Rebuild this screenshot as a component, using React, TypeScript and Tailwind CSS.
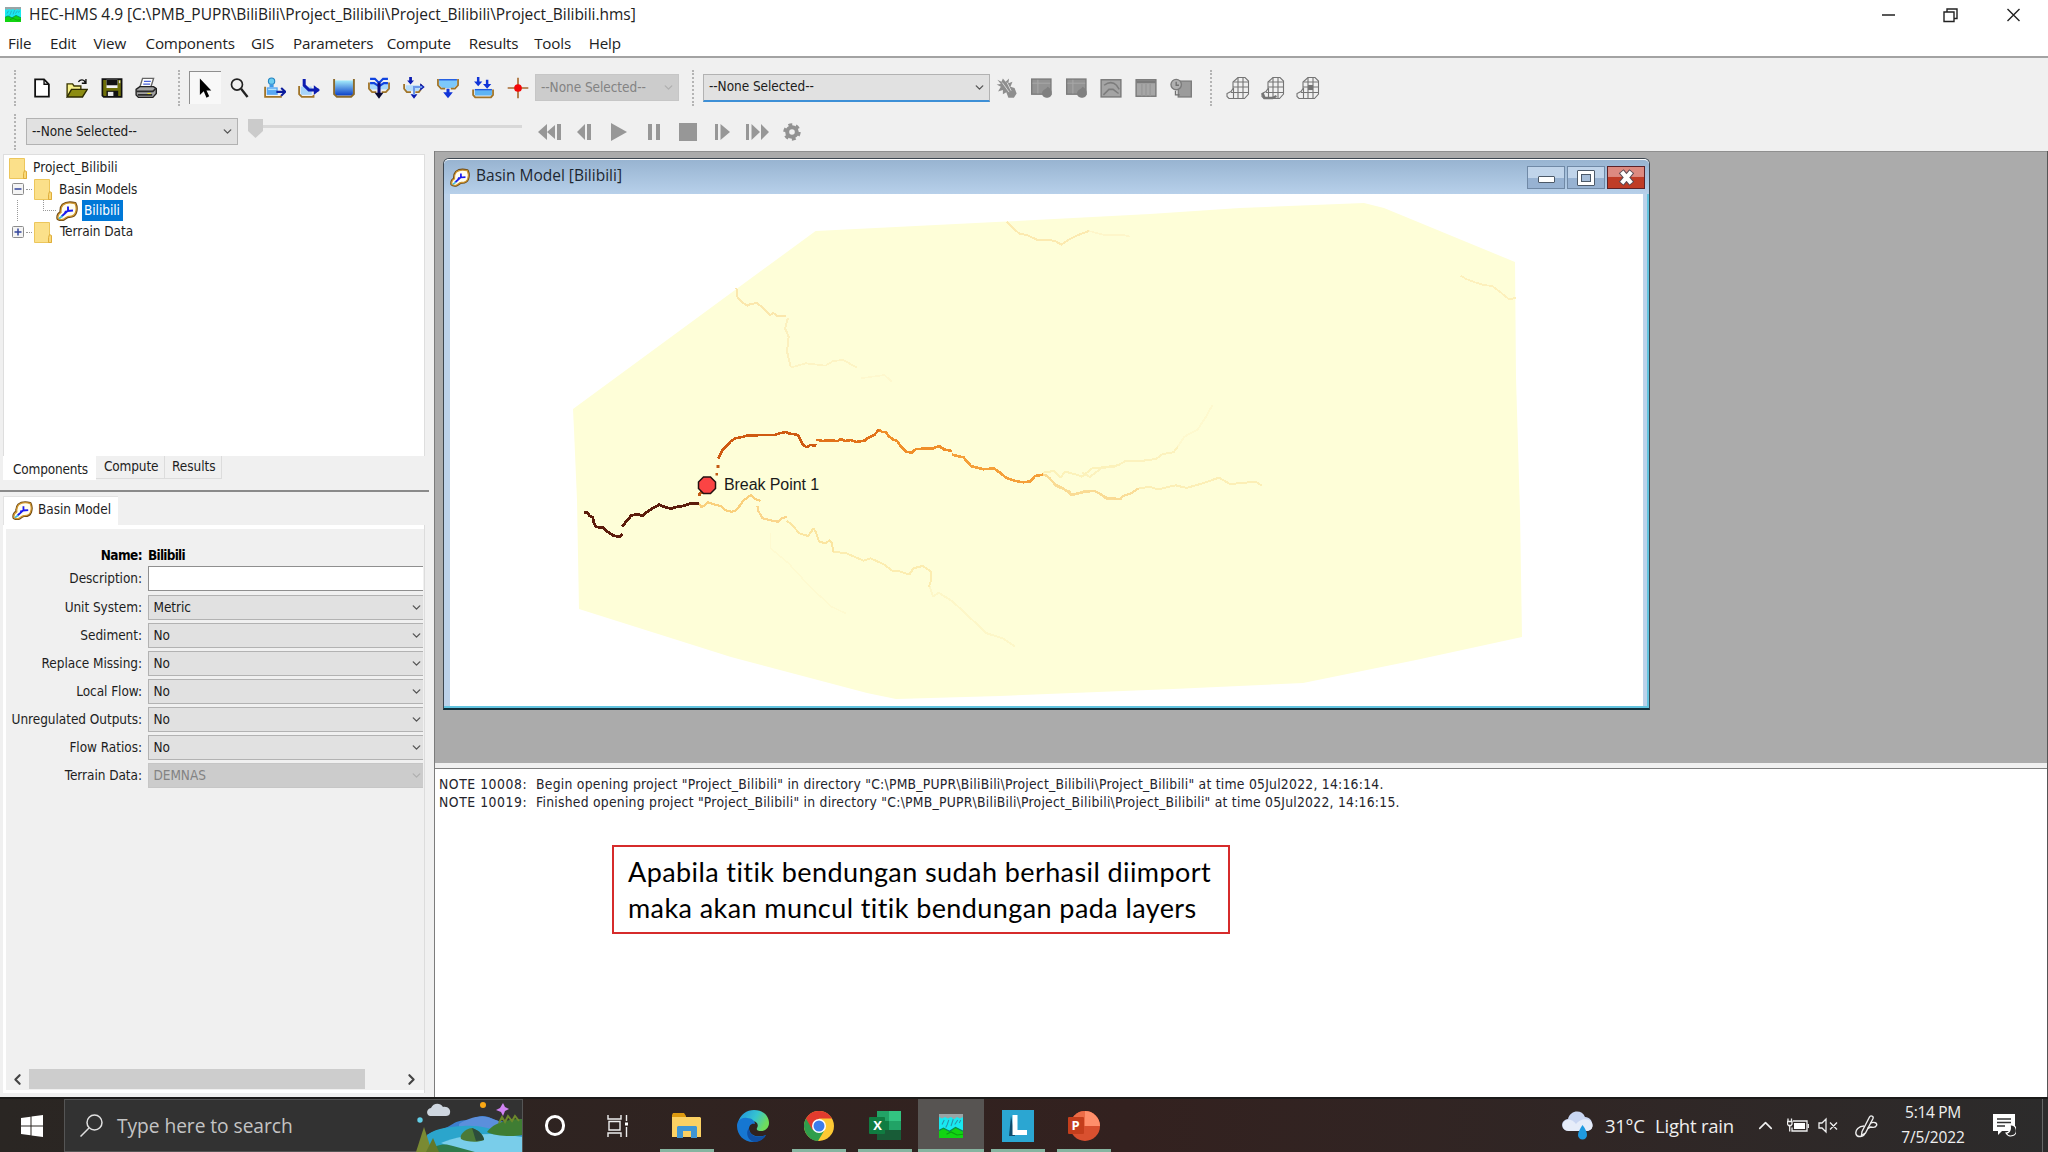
import type { ReactNode } from 'react';
import clsx from 'clsx';
import { ChevronDown, ChevronLeft, ChevronRight, ChevronUp, Search } from 'lucide-react';

const swingFont = "font-['DejaVu_Sans_Condensed','DejaVu_Sans',sans-serif] text-[13.5px] leading-none whitespace-pre";
const swing = `${swingFont} tracking-[-0.05px]`;
const segoe = "font-['Open_Sans','Noto_Sans',sans-serif] leading-none whitespace-pre";

const menus = [
  { label: 'File', cell: 'w-[42px]' },
  { label: 'Edit', cell: 'w-[43.5px]' },
  { label: 'View', cell: 'w-[52px]' },
  { label: 'Components', cell: 'w-[105.5px]' },
  { label: 'GIS', cell: 'w-[42px]' },
  { label: 'Parameters', cell: 'w-[93.7px]' },
  { label: 'Compute', cell: 'w-[82px]' },
  { label: 'Results', cell: 'w-[65.5px]' },
  { label: 'Tools', cell: 'w-[54.5px]' },
  { label: 'Help', cell: 'w-[50px]' },
];

const fields = [
  { label: 'Unit System:', value: 'Metric' },
  { label: 'Sediment:', value: 'No' },
  { label: 'Replace Missing:', value: 'No' },
  { label: 'Local Flow:', value: 'No' },
  { label: 'Unregulated Outputs:', value: 'No' },
  { label: 'Flow Ratios:', value: 'No' },
  { label: 'Terrain Data:', value: 'DEMNAS', disabled: true },
];

const notes = [
  { id: 'NOTE 10008:  ', text: 'Begin opening project "Project_Bilibili" in directory "C:\\PMB_PUPR\\BiliBili\\Project_Bilibili\\Project_Bilibili" at time 05Jul2022, 14:16:14.' },
  { id: 'NOTE 10019:  ', text: 'Finished opening project "Project_Bilibili" in directory "C:\\PMB_PUPR\\BiliBili\\Project_Bilibili\\Project_Bilibili" at time 05Jul2022, 14:16:15.' },
];

// ---------- Small shared pieces ----------

function Handle() {
  return <div className="h-[36px] w-0 shrink-0 border-l-2 border-dotted border-[#b4b4b4]" />;
}

function Cell({ children }: { children: ReactNode }) {
  return <div className="flex w-[34.7px] shrink-0 items-center justify-center">{children}</div>;
}

function Icon16({ children, className }: { children: ReactNode; className?: string }) {
  return (
    <svg viewBox="0 0 16 16" className={clsx('h-[22px] w-[22px] shrink-0', className)} fill="none">
      {children}
    </svg>
  );
}

function HmsLogo({ className }: { className?: string }) {
  return (
    <svg viewBox="0 0 16 16" preserveAspectRatio="none" className={className}>
      <rect width="16" height="16" fill="#19e8f0" />
      <path d="M0 0h16v2l-2 1-2-1-2 1.500-2-1.500-2 1-2-1-2 1-2-1z" fill="#9aa4a6" />
      <path d="M3.500 4l-1.500 3M6.500 4l-1 3-1 2M9.500 3.500L8 8M12.500 4l-2 3M14.500 4l-1 2" stroke="#2a93a8" strokeWidth=".7" fill="none" />
      <path d="M0 11l3-1.500 4 2 4-2.500 5 2.500V16H0z" fill="#12d412" />
      <path d="M0 11l3-1.500 4 2 4-2.500 5 2.500" stroke="#0a8a50" strokeWidth=".8" fill="none" />
      <path d="M5 13.500l3-1.500 4 2 4-.5" stroke="#0aa010" strokeWidth=".8" fill="none" />
    </svg>
  );
}

function BasinIcon({ className }: { className?: string }) {
  const outline = 'M2 17.500c-.5-3 0-4.500 3-6C5 9 4.500 6.500 7 4c3-2.500 8-2.500 12-1.500 1.500 3 1.500 6 .5 9-1 3-4 4-7 3.800-3 .5-4 3-6 3.200-2 .2-3.500 0-4.500-1z';
  return (
    <svg viewBox="0 0 22 20" className={clsx('shrink-0', className)} fill="none">
      <path d={outline} fill="#fffbe2" stroke="#6e4812" strokeWidth="3.200" strokeLinejoin="round" />
      <path d={outline} fill="#fffdf0" stroke="#cf962e" strokeWidth="1.300" />
      <path d="M5.500 15.500l6.500-6V5.500M11.500 10l5.500-.5M8.500 13l1.500-3" stroke="#1a1af0" strokeWidth="1.900" />
      <path d="M3 17.500l3.500-2.500" stroke="#40b8d8" strokeWidth="1.800" />
    </svg>
  );
}

function Folder() {
  return (
    <svg viewBox="0 0 18 21" className="h-[21px] w-[18px] shrink-0">
      <path d="M.5.500h15v14l2 1v5H.5z" fill="#fbe08a" stroke="#ecc65c" />
      <path d="M14.500 20.500v-5l1-3 2 1v7z" fill="#f9d878" stroke="#dfae3c" />
    </svg>
  );
}

function Expander({ plus }: { plus?: boolean }) {
  return (
    <svg viewBox="0 0 12 12" className="h-[12px] w-[12px] shrink-0">
      <rect x=".5" y=".5" width="11" height="11" rx="1" fill="#f4f4f4" stroke="#8c8c8c" />
      <path d={plus ? 'M2.500 6h7M6 2.500v7' : 'M2.500 6h7'} stroke="#33469c" strokeWidth="1.500" />
    </svg>
  );
}

function Combo({ value, className, disabled, focused }: { value: string; className?: string; disabled?: boolean; focused?: boolean }) {
  return (
    <div
      className={clsx(
        'flex shrink-0 items-center justify-between border pl-[5px]',
        disabled ? 'border-[#c6c6c6] bg-[#cccccc] text-[#838383]' : 'border-[#b2b2b2] bg-[#e1e1e1] text-[#1c1c1c]',
        focused && 'border-b-2 border-b-[#3d8fd6]',
        className,
      )}
    >
      <span className={swing}>{value}</span>
      <ChevronDown className={clsx('h-[13px] w-[13px] shrink-0', disabled ? 'text-[#b0b0b0]' : 'text-[#555]')} strokeWidth={2.500} />
    </div>
  );
}

// ---------- Toolbar icons ----------

const Grid = ({ variant }: { variant?: 'bold' | 'dot' }) => (
  <svg viewBox="0 0 24 24" className="h-[24px] w-[24px]" fill="none" stroke="#747474" strokeWidth="1.100">
    <path d="M12 1.500h7l3.500 3.500v13l-4 4.500H3l-2-2v-3l4-2 2-3V6z" />
    <path d="M12 1.500v21M17 1.500v21M7.500 6h15M7 11h15.500M5 16.500h17.500M7.500 12v10.500" />
    {variant === 'bold' && <path d="M1.500 17l2 5h8l4-2" strokeWidth="2.400" />}
    {variant === 'dot' && <rect x="12.500" y="9.500" width="4" height="4" fill="#747474" />}
  </svg>
);

function MainToolbar() {
  return (
    <div className="flex h-[58px] items-center pl-[14px] pt-[1px]">
      <Handle />
      <div className="ml-[9px] flex">
        <Cell>
          <Icon16><path d="M3 1.800h6.500L13 5.300v9H3z" fill="#fff" stroke="#111" strokeWidth="1.300" /><path d="M9.500 1.800v3.500H13" stroke="#111" /></Icon16>
        </Cell>
        <Cell>
          <Icon16>
            <path d="M.8 14V5h4l1 1.500h5V9" fill="#f6f08a" stroke="#3a3600" />
            <path d="M.8 14.500L4 9h11.500L12 14.500z" fill="#8c8c12" stroke="#2c2a00" />
            <path d="M9 3.500c1.500-2 4-2 5 .5M14.500 1.500v3h-3" stroke="#111" />
          </Icon16>
        </Cell>
        <Cell>
          <Icon16>
            <path d="M1 1.500h14v13H2L1 13.500z" fill="#6f7008" stroke="#111" strokeWidth="1.200" />
            <rect x="4" y="2" width="8" height="6" fill="#f4f4f4" /><rect x="4" y="2" width="8" height="4" fill="#141414" />
            <rect x="4" y="10" width="8.500" height="4.500" fill="#111" /><rect x="5" y="10.800" width="4" height="3" fill="#e8e8e8" /><path d="M13.500 2.500v2" stroke="#ddd" />
          </Icon16>
        </Cell>
        <Cell>
          <Icon16>
            <path d="M5.500 1h8L11.500 7.500h-8z" fill="#fff" stroke="#666" /><path d="M6.500 3.200h5M6 5.200h5" stroke="#4860d8" />
            <path d="M.8 9L3.500 7h10l2 1.500V12l-2.500 2.800H2.500L.8 13z" fill="#a4a4a4" stroke="#222" />
            <path d="M1 10.500h12l2.500-2.500M2 13h10.500" stroke="#2c2c2c" strokeWidth="1.200" /><path d="M9 12h2.500" stroke="#e8e020" strokeWidth=".8" />
          </Icon16>
        </Cell>
      </div>
      <div className="ml-[14px]"><Handle /></div>
      <div className="ml-[9px] flex h-[33px] w-[32px] items-center justify-center border-l border-t border-[#8f8f8f] bg-[#f8f8f8]">
        <Icon16 className="-ml-[3px]"><path d="M5 1v12l2.800-2.600L9.800 15l2-1-2-4.200h3.500z" fill="#000" /></Icon16>
      </div>
      <div className="ml-[2px] flex">
        <Cell><Icon16><circle cx="5.800" cy="5.500" r="4" stroke="#222" strokeWidth="1.200" /><path d="M8.800 8.500l4.700 6" stroke="#222" strokeWidth="1.700" /></Icon16></Cell>
        {/* subbasin */}
        <Cell>
          <Icon16>
            <circle cx="5.500" cy="3" r="2.300" fill="#6ccdf0" stroke="#2484c0" strokeWidth=".8" /><path d="M4 5.500h3v2H4z" fill="#3a9ae8" />
            <path d="M2 7.500h8v5.500H2z" fill="#58a8f4" /><path d="M3 9h6" stroke="#b4e4fc" /><path d="M.8 7v7.500h11.500V13.500" stroke="#a07428" strokeWidth="1.300" />
            <path d="M9 10.800h5.500M12.500 8l3 2.800-3 2.800" stroke="#0c1c9c" strokeWidth="1.500" />
          </Icon16>
        </Cell>
        {/* reach */}
        <Cell>
          <Icon16>
            <path d="M2 7h8v6H2z" fill="#a8d4f8" /><path d="M.8 6.500v6l2 2h8.500V13" stroke="#a07428" strokeWidth="1.300" />
            <path d="M4.500 1.500v4.500l3.500 3.500H15" stroke="#0c1cb0" strokeWidth="2.200" /><path d="M11.500 6L16 9.500 11.500 13z" fill="#0c1cb0" />
          </Icon16>
        </Cell>
        {/* reservoir */}
        <Cell>
          <svg viewBox="0 0 16 16" className="h-[22px] w-[22px]" fill="none">
            <defs>
              <linearGradient id="water" x1="0" y1="0" x2="0" y2="1"><stop offset="0" stopColor="#a4ecfc" /><stop offset="1" stopColor="#0a3fc8" /></linearGradient>
            </defs>
            <rect x="1.500" y="2.500" width="13" height="11" fill="url(#water)" />
            <path d="M.8 1.500v11l2 1.800h10.400l2-1.800v-11" stroke="#8a6a2c" strokeWidth="1.400" />
          </svg>
        </Cell>
        {/* junction */}
        <Cell>
          <Icon16>
            <path d="M1.500 5h13v4h-13z" fill="#a6d6fa" /><path d="M.7 4v4.500L3 11h3M15.300 4v4.500L13 11h-3" stroke="#a07428" strokeWidth="1.300" />
            <path d="M1.500 1.300h3.500l3 3 3-3h3.500M1.500 4.500h3l3 2M14.500 4.500h-3l-3 2" stroke="#1044e0" strokeWidth="1.600" /><path d="M8 4v8" stroke="#0c0c7c" strokeWidth="2.200" />
            <path d="M4.800 11.500h6.400L8 15.800z" fill="#0a0a30" />
          </Icon16>
        </Cell>
        {/* diversion */}
        <Cell>
          <Icon16>
            <path d="M2 6h10v4H2z" fill="#b4dcfa" /><path d="M.8 5v3.500l2 2.500h3M13 5v1M9 11h2.500l1.500-2" stroke="#a07428" strokeWidth="1.300" />
            <path d="M5.500 0v3" stroke="#0c1cb0" strokeWidth="2" /><path d="M3 2.500h5L5.500 5.500zM5.500 12.500h5L8 15.800zM12.500 4.500L15.800 7.300l-3.300 2.700z" fill="#0c1cb0" />
            <path d="M8 13V7.300h6" stroke="#6c98e8" strokeWidth="1.500" />
          </Icon16>
        </Cell>
        {/* source */}
        <Cell>
          <Icon16>
            <path d="M1.500 1.800h13V6l-2.500 2H4L1.500 6z" fill="#7cc8fa" /><path d="M.7 1.500V6L3 8.500h3M15.300 1.500V6L13 8.500h-3" stroke="#a07428" strokeWidth="1.300" />
            <path d="M1.500 2h13" stroke="#1c58e0" /><path d="M8 8.500v3.500" stroke="#1034d8" strokeWidth="2.200" /><path d="M4.500 11h7L8 15.500z" fill="#1034d8" />
          </Icon16>
        </Cell>
        {/* sink */}
        <Cell>
          <Icon16>
            <path d="M2 9.500h12.500v4H2z" fill="#5eb4f4" /><path d="M.8 9v4l1.500 1.800h11.500l1.500-1.800V9" stroke="#a07428" strokeWidth="1.300" />
            <path d="M4.500 0v4M11 2v4" stroke="#1034d8" strokeWidth="1.800" /><path d="M1.500 3.200h6l-3 3.500zM8 5h6l-3 3.500z" fill="#1034d8" />
            <path d="M2 9.200h12.500" stroke="#1c58e0" />
          </Icon16>
        </Cell>
        {/* break point */}
        <Cell><Icon16><path d="M8 .5v15M.5 8h15" stroke="#a86a30" strokeWidth="1.200" /><circle cx="8" cy="8" r="2.800" fill="#f40808" /></Icon16></Cell>
      </div>
      <Combo value="--None Selected--" disabled className="h-[27px] w-[144px] pr-[3px]" />
      <div className="ml-[13px]"><Handle /></div>
      <Combo value="--None Selected--" focused className="ml-[9px] h-[28px] w-[287px] pr-[3px]" />
      <div className="flex">
        <Cell>
          <Icon16><path d="M1 2l3 1.500L5 1l2 2.500L9.500 1 9 4.500l3-1-1.500 3.500 3 1 1.500 4-2 3H9L7.500 11 5 12.500 5 9.500 1.500 10.500 3.500 7 .5 5.500l3-.5z" fill="#8e8e8e" /><path d="M4.500 4l5 7M8 4l3 6" stroke="#d8d8d8" strokeWidth=".7" /></Icon16>
        </Cell>
        {[0, 1].map(i => (
          <Cell key={i}>
            <Icon16><rect x=".5" y="1.500" width="14" height="11" fill="#939393" stroke="#7b7b7b" /><path d="M1 4.500h13M5 2v10" stroke="#aaa" strokeWidth=".7" /><path d="M8 12c0-3 3-3 4-5 2 1 3.500 3 3 5.500s-2.500 2.500-4 2.500S8 14 8 12z" fill="#808080" /></Icon16>
          </Cell>
        ))}
        <Cell><Icon16><rect x=".8" y="2" width="14.400" height="12.500" fill="#a4a4a4" stroke="#787878" /><path d="M3 6c4-3 7-2 9 0l2 3M2.500 13l4-4h3l4 3" stroke="#7c7c7c" strokeWidth="1.100" /></Icon16></Cell>
        <Cell><Icon16><rect x=".8" y="2" width="14.400" height="12" fill="#a6a6a6" stroke="#787878" /><path d="M1 3.500h14" stroke="#7a7a7a" strokeWidth="2" /><path d="M5 5v9M8 5v9M11 5v9" stroke="#989898" /></Icon16></Cell>
        <Cell><Icon16><rect x="6" y="3" width="9.500" height="11.500" fill="#9b9b9b" stroke="#7d7d7d" /><circle cx="4.500" cy="5.500" r="3.800" fill="#b0b0b0" stroke="#7a7a7a" /><path d="M4.500 3.500v2.500h2M4 10v3h3" stroke="#707070" /></Icon16></Cell>
      </div>
      <div className="ml-[12px]"><Handle /></div>
      <div className="ml-[9px] flex">
        <Cell><Grid /></Cell>
        <Cell><Grid variant="bold" /></Cell>
        <Cell><Grid variant="dot" /></Cell>
      </div>
    </div>
  );
}

const players = [
  'M0 9L9 1v16zM9 9l8-7v14zM19 1h4v16h-4z',
  'M4 9l8-8v16zM14 1h4v16h-4z',
  'M4 0l16 9-16 9z',
  'M6 1h4v16H6zM14 1h4v16h-4z',
  'M2 0h18v18H2z',
  'M4 1h3v16H4zM9.500 1L19 9l-9.500 8z',
  'M0 1h3v16H0zM5.500 1L14 9l-8.500 8zM15 1l8 8-8 8z',
];

function PlayToolbar() {
  return (
    <div className="flex h-[35px] items-center pb-[4px] pl-[14px]">
      <Handle />
      <Combo value="--None Selected--" className="ml-[10px] h-[27px] w-[212px] pr-[3px]" />
      <div className="ml-[10px] flex h-[26px] w-[274px] items-start">
        <svg viewBox="0 0 15 19" className="h-[19px] w-[15px]"><path d="M0 0h15v12l-7.500 7L0 12z" fill="#cbcbcb" /></svg>
        <div className="mt-[6px] h-[3px] flex-1 bg-[#d8d8d8]" />
      </div>
      <div className="ml-[10px] flex">
        {players.map(d => (
          <Cell key={d}><svg viewBox="0 0 23 18" className="h-[18px] w-[23px]"><path d={d} fill="#979797" /></svg></Cell>
        ))}
        <Cell>
          <svg viewBox="0 0 18 18" className="h-[18px] w-[18px]" fill="none">
            <circle cx="9" cy="9" r="4.800" stroke="#929292" strokeWidth="4" />
            <circle cx="9" cy="9" r="7.200" stroke="#929292" strokeWidth="3" strokeDasharray="3.800 3.740" />
          </svg>
        </Cell>
      </div>
    </div>
  );
}

// ---------- Left side ----------

function Tree() {
  return (
    <div className="ml-[3px] mr-[9px] mt-[3px] h-[302px] border border-b-0 border-[#dedede] bg-white pl-[5px] pt-[2.500px] text-[#1e1e1e]">
      <div className="flex h-[21.300px] items-center">
        <Folder />
        <span className={clsx(swingFont, 'ml-[6px] tracking-[0.05px]')}>Project_Bilibili</span>
      </div>
      <div className="flex h-[21.300px] items-center pl-[3px]">
        <Expander />
        <div className="w-[10px] px-[2px]"><div className="border-t border-dotted border-[#999]" /></div>
        <Folder />
        <span className={clsx(swingFont, 'ml-[7px] tracking-[-0.13px]')}>Basin Models</span>
      </div>
      <div className="flex h-[21.300px] items-center pl-[8px]">
        <div className="h-full border-l border-dotted border-[#999]" />
        <div className="mb-[10px] ml-[25px] h-[11px] w-[13px] border-b border-l border-dotted border-[#999]" />
        <BasinIcon className="h-[20px] w-[22px]" />
        <span className={clsx(swing, 'ml-[4px] flex h-[21px] w-[41px] items-center bg-[#0078d7] pl-[2px] text-white')}>Bilibili</span>
      </div>
      <div className="flex h-[21.300px] items-center pl-[3px]">
        <Expander plus />
        <div className="w-[10px] px-[2px]"><div className="border-t border-dotted border-[#999]" /></div>
        <Folder />
        <span className={clsx(swing, 'ml-[8px]')}>Terrain Data</span>
      </div>
    </div>
  );
}

function Sidebar() {
  return (
    <div className="flex w-[434px] shrink-0 flex-col bg-[#f0f0f0]">
      <Tree />
      <div className="flex h-[34px] items-start pl-[3px] text-[#1e1e1e]">
        <div className={clsx(swingFont, 'flex h-[24px] w-[93px] items-center bg-white pl-[10px] pt-[4px] tracking-[-0.2px]')}>Components</div>
        <div className={clsx(swingFont, 'flex h-[23px] w-[69px] items-center border-b border-r border-[#dcdcdc] pl-[8px] tracking-[-0.15px]')}>Compute</div>
        <div className={clsx(swingFont, 'flex h-[23px] w-[57px] items-center border-b border-r border-[#dcdcdc] pl-[7px] tracking-[-0.05px]')}>Results</div>
      </div>
      <div className="mr-[5px] h-[1.500px] bg-[#8a8a8a]" />
      <div className="ml-[3px] mt-[4px] flex h-[29px] w-[115px] items-center border-l border-t border-[#e2e2e2] bg-white pb-[1px] pl-[8px] text-[#1e1e1e]">
        <BasinIcon className="h-[19px] w-[21px]" />
        <span className={clsx(swingFont, 'ml-[5px] tracking-[-0.05px]')}>Basin Model</span>
      </div>
      <div className="mb-[4px] ml-[3px] mr-[9px] flex flex-1 flex-col border-r border-[#dcdcdc] bg-white pb-[3px] pl-[3px] pt-[4px]">
        <div className="flex flex-1 flex-col bg-[#f0f0f0] pt-[17px] text-[#1e1e1e]">
          <div className="flex h-[20px] items-center font-bold text-black">
            <span className={clsx(swingFont, 'w-[136px] text-right tracking-[-0.55px]')}>Name:</span>
            <span className={clsx(swingFont, 'ml-[6px] tracking-[-0.75px]')}>Bilibili</span>
          </div>
          <div className="flex h-[25px] items-center">
            <span className={clsx(swing, 'w-[136px] pt-[2px] text-right')}>Description:</span>
            <div className="ml-[5.500px] h-[25px] w-[275px] border border-r-0 border-[#8f8f8f] bg-white" />
          </div>
          <div className="mt-[3px] flex flex-col">
            {fields.map(f => (
              <div key={f.label} className="flex h-[28px] items-center">
                <span className={clsx(swing, 'w-[136px] text-right')}>{f.label}</span>
                <Combo value={f.value} disabled={f.disabled} className="ml-[5.500px] h-[25px] w-[275px] border-r-0" />
              </div>
            ))}
          </div>
          <div className="mt-auto mb-[1px] flex h-[20px] items-center">
            <ChevronLeft className="ml-[3px] h-[17px] w-[17px] text-[#444]" strokeWidth={3} />
            <div className="ml-[3px] h-full w-[336px] bg-[#cdcdcd]" />
            <ChevronRight className="ml-[38px] h-[17px] w-[17px] text-[#444]" strokeWidth={3} />
          </div>
        </div>
      </div>
    </div>
  );
}

// ---------- Basin map ----------

type River = { pts: string; color: string; width: number };

// Each tile of the map keeps its river points in its own grid
const westRivers: River[] = [
  { pts: '590,400 590,445 640,490 700,560 760,620 800,640', color: '#fefad0', width: 1.5 },
  { pts: '1035,560 1045,590 1060,578 1100,605 1150,655 1195,700 1240,715 1275,740', color: '#fdf7c8', width: 2 },
  { pts: '765,456 800,459 850,482 870,475 905,492 930,512 950,514 978,524 990,505 1015,498 1040,515 1040,540 1033,560', color: '#fcedb0', width: 2 },
  { pts: '635,362 650,375 670,400 695,408 710,385 718,400 725,425 745,430 755,420 762,430 765,456', color: '#fbe5a0', width: 2 },
  { pts: '387,310 397,322 415,307 430,313 450,318 462,330 480,335 490,333 500,322 515,300 535,285 548,298 562,303', color: '#fad07c', width: 2.2 },
  { pts: '553,318 555,332 567,355 585,360 610,365 622,355 635,350', color: '#fbd68c', width: 2.2 },
  { pts: '1353,218 1383,213 1402,232 1415,215 1440,222 1462,230 1490,205 1520,202 1568,195', color: '#fcf2ba', width: 2 },
  { pts: '1353,223 1370,233 1385,252 1410,265 1430,284 1460,278 1497,272 1530,293 1568,297', color: '#fadb94', width: 2.2 },
  { pts: '1098,164 1112,168 1130,172 1140,185 1152,199 1172,204 1185,208 1215,205 1232,218 1250,234 1275,243 1298,247 1318,244 1330,228 1353,224', color: '#f5a03a', width: 2.6 },
  { pts: '893,89 902,96 912,96 922,110 932,118 945,124 955,140 970,155 985,158 997,147 1020,146 1045,145 1062,138 1075,148 1097,153', color: '#f08f2a', width: 2.6 },
  { pts: '718,119 735,123 752,121 778,123 787,117 797,123 815,120 830,126 855,121 862,114 880,105 893,89', color: '#e2721a', width: 2.6 },
  { pts: '443,176 448,165 455,150 470,134 480,122 492,115 510,111 525,106 600,105 618,99 632,96 642,101 660,103 668,108 674,122 680,135 692,142 700,135 718,137', color: '#cf5a12', width: 2.6 },
  { pts: '389,288 392,280 400,276', color: '#c45a14', width: 3 },
  { pts: '67,338 77,338 82,347 92,352 95,370 102,381 122,383 130,394 142,401 150,407 168,411 176,402', color: '#5c1c0c', width: 2.8 },
  { pts: '173,380 188,362 200,346 215,343 232,347 243,336 258,326 278,314 290,320 310,326 325,321 345,318 365,311 388,310', color: '#5c1c0c', width: 2.8 },
];

const northRivers: River[] = [
  { pts: '775,430 777,455 790,473 803,482 812,476 828,475 845,492 860,511 868,503 876,512 900,512', color: '#fbe7ac', width: 2 },
  { pts: '905,520 898,550 907,575 903,620 912,665', color: '#fcf0be', width: 2 },
  { pts: '912,668 950,655 1000,662 1020,648 1045,645 1080,668', color: '#fdf4c4', width: 1.8 },
  { pts: '1090,700 1120,695 1150,690 1168,710', color: '#fef8ce', width: 1.6 },
];

const eastRivers: River[] = [
  { pts: '15,230 30,250 45,266 62,270 85,284 125,287 142,299 158,284 180,270 205,258', color: '#fceab0', width: 2 },
  { pts: '205,258 240,270 285,270 300,275', color: '#fef6ca', width: 1.6 },
  { pts: '1062,392 1075,402 1095,412 1115,420 1135,423 1155,443 1175,464 1190,458', color: '#fdf0bc', width: 1.8 },
  { pts: '190,983 207,996 235,968 262,967 290,948 325,948 360,942 375,927 400,922 410,905', color: '#fcf2be', width: 2 },
  { pts: '410,905 425,875 455,855 475,815 490,780', color: '#fef9ce', width: 1.8 },
  { pts: '105,988 130,1023 160,1040 165,1050 180,1047 190,1040 215,1037 232,1048 245,1061 278,1062 285,1052 300,1047 320,1030', color: '#fadd98', width: 2.2 },
  { pts: '320,1030 345,1026 365,1033 405,1021 430,1029 470,1014 505,998 530,1017 560,1014 590,1010 603,1022', color: '#fcefb6', width: 2 },
];

function Rivers({ list, transform }: { list: River[]; transform: string }) {
  return (
    <g transform={transform} fill="none" shapeRendering="crispEdges">
      {list.map(r => (
        <polyline key={r.pts} points={r.pts} stroke={r.color} strokeWidth={r.width} strokeLinejoin="bevel" vectorEffect="non-scaling-stroke" />
      ))}
    </g>
  );
}

function BasinMap() {
  return (
    <div className="relative flex-1 overflow-hidden bg-white">
      <svg viewBox="450 194 1193 512" className="block h-[512px] w-[1193px]">
        <polygon
          points="573,409 815.6,231 1006,221.500 1150,214 1240,208 1364,203 1384,208 1515,262 1516,378 1520,512 1522,637 1416,660 1303,683 1173,689 1000,696 896,699 867,693 731,657 579,609 577,500 574,430"
          fill="#fefed8"
        />
        <Rivers list={northRivers} transform="translate(430 145) scale(.3954 .3333)" />
        <Rivers list={eastRivers} transform="translate(1000 145) scale(.4337 .3333)" />
        <Rivers list={westRivers} transform="translate(560 400) scale(.3571 .3333)" />
        <rect x="715.500" y="473" width="2.500" height="2.500" fill="#c45a14" />
        <rect x="716.500" y="465" width="3" height="3" fill="#c45a14" />
        <path d="M703.500 477h7l5 5v6.500l-5 5h-7l-5-5v-6.500z" fill="#fb4444" stroke="#241010" strokeWidth="1.500" />
      </svg>
      <span className="absolute left-[274px] top-[283px] whitespace-pre font-['Liberation_Sans',Arial,sans-serif] text-[16px] leading-none tracking-[-0.08px] text-[#1a1a1a]">Break Point 1</span>
    </div>
  );
}

function BasinWindow() {
  return (
    <div className="ml-[8px] mt-[6px] flex h-[552px] w-[1207px] flex-col rounded-t-[6px] border border-[#3c4650] border-b-2 border-b-[#10303c] bg-[#bcd2ea]">
      <div className="flex h-[36px] items-center rounded-t-[5px] border-t border-white bg-linear-to-b from-[#98b4d1] to-[#b7d0ea] pl-[6px]">
        <BasinIcon className="h-[19px] w-[20px]" />
        <span className={clsx(segoe, 'ml-[6px] mb-[2px] text-[15.500px] tracking-[0px] text-[#1d2731]')}>Basin Model [Bilibili]</span>
        <div className="ml-auto mr-[4px] mt-[1px] flex gap-[2px]">
          <div className="flex h-[23px] w-[38px] items-center justify-center border border-[#7089a6] bg-linear-to-b from-[#c0d4ea] from-50% to-[#97b2d2] to-50%">
            <div className="mt-[3px] h-[7px] w-[17px] rounded-[1px] border border-[#4c5968] bg-white" />
          </div>
          <div className="flex h-[23px] w-[38px] items-center justify-center border border-[#7089a6] bg-linear-to-b from-[#c0d4ea] from-50% to-[#97b2d2] to-50%">
            <div className="flex h-[16px] w-[18px] items-center justify-center rounded-[1px] border border-[#4c5968] bg-white">
              <div className="h-[8px] w-[10px] border border-[#4c5968] bg-[#a6bdd8]" />
            </div>
          </div>
          <div className="flex h-[23px] w-[38px] items-center justify-center border border-[#5c2228] bg-linear-to-b from-[#dd8a80] from-45% to-[#c03c26] to-50%">
            <svg viewBox="0 0 18 16" className="h-[17px] w-[19px]" fill="none">
              <path d="M4 2l10 12M14 2L4 14" stroke="#5a4a54" strokeWidth="6" />
              <path d="M4.500 2.600l9 10.800M13.500 2.600l-9 10.800" stroke="#fff" strokeWidth="4" />
            </svg>
          </div>
        </div>
      </div>
      <div className="flex flex-1 border-b-2 border-r-2 border-[#62c4e0] pl-[6px] pr-[4px]">
        <BasinMap />
      </div>
    </div>
  );
}

function Console() {
  return (
    <div className="relative flex-1 border-t border-[#808080] bg-white pl-[4px] pt-[6px]">
      {notes.map(n => (
        <div key={n.id} className="whitespace-pre font-['DejaVu_Sans_Condensed','DejaVu_Sans',sans-serif] text-[13.800px] leading-[18px] tracking-[0.24px] text-[#24242c]">
          <span className="tracking-[0.55px]">{n.id}</span>
          {n.text}
        </div>
      ))}
      {/* instruction note laid over the log */}
      <div className="absolute left-[177px] top-[76px] h-[89px] w-[618px] whitespace-pre border-2 border-[#d62b2b] bg-white pl-[14px] pt-[7px] font-['Lato','Carlito',sans-serif] text-[27px] leading-[36px] tracking-[0.41px] text-black [font-variant-ligatures:none]">
        <div>Apabila titik bendungan sudah berhasil diimport</div>
        <div>maka akan muncul titik bendungan pada layers</div>
      </div>
    </div>
  );
}

// ---------- Taskbar ----------

function SearchArt() {
  return (
    <svg viewBox="0 0 107 53" className="h-[53px] w-[107px] shrink-0">
      <path d="M12 36c10-6 14-4 24-10 12-8 18-2 26-8 10-4 16 4 24 4l21 6v25H12z" fill="#3d7fd0" />
      <path d="M44 25c8-5 18-9 28-7 10 3 18 8 35 10v8H44z" fill="#5b8fdc" />
      <path d="M12 36c12-8 22-8 36-9 20-1 30 4 59 10v16H14z" fill="#2ba5cc" />
      <path d="M26 44c20-9 50-12 81-6v15H50z" fill="#79cdea" />
      <path d="M46 40c-2-4 4-10 11-11 7 2 12 8 12 12-6 3-18 2-23-1z" fill="#4b7a38" />
      <path d="M57 29c7 2 12 8 12 12l-8 1z" fill="#2c4d3c" />
      <path d="M72 33c6-9 20-13 35-13v16c-10 2-28 1-35-3z" fill="#3f7d33" />
      <path d="M84 24l3-6 3 5 3-6 4 5 3-5 4 5" stroke="#6d8a2c" strokeWidth="2" fill="none" />
      <path d="M14 53c6-8 16-9 24-6l22 6z" fill="#2f7a4b" />
      <path d="M1 53l8-25 8 25z" fill="#7a8a32" /><path d="M11 53l7-14 6 14z" fill="#63782a" />
      <path d="M15 17c-4-1-4-7 1-8 2-5 9-6 12-1 5-1 8 3 7 6 0 2-2 3-4 3z" fill="#ced6df" />
      <circle cx="68" cy="6" r="3" fill="#f9a814" /><circle cx="5" cy="21" r="2.700" fill="#62cfe8" />
      <path d="M88 4l2 4 4 2-4 2-2 5-2-4-5-2 4-2z" fill="#d184f4" />
    </svg>
  );
}

function TaskApp({ children, open, active }: { children: ReactNode; open?: boolean; active?: boolean }) {
  return (
    <div className={clsx('flex h-full w-[66.100px] shrink-0 flex-col items-center', active && 'bg-[#575452]')}>
      <div className="flex flex-1 items-center pt-[3px]">{children}</div>
      <div className={clsx('h-[3px]', active ? 'w-full' : 'w-[54px]', open && 'bg-[#86b4a0]')} />
    </div>
  );
}

function Taskbar() {
  return (
    <div className="flex h-[55px] shrink-0 border-t-2 border-[#1b1a19] bg-linear-to-r from-[#2a2623] via-[#33211f] via-55% to-[#2c2b2b] text-[#efefef]">
      <div className="flex w-[64px] items-center justify-center">
        <svg viewBox="0 0 22 22" className="h-[22px] w-[22px]" fill="#fff"><path d="M0 3l9.500-1.300v8.800H0zM10.500 1.500L22 0v10.500H10.500zM0 11.500h9.500v8.800L0 19zM10.500 11.500H22V22l-11.500-1.500z" /></svg>
      </div>
      <div className="flex w-[459px] items-center border border-[#555] bg-[#323232]">
        <svg viewBox="0 0 23 23" className="ml-[15px] h-[23px] w-[23px] text-[#e0e0e0]" fill="none" stroke="currentColor" strokeWidth="1.500"><circle cx="14.500" cy="8.500" r="7.500" /><path d="M9 14l-8.500 8.500" /></svg>
        <span className={clsx(segoe, 'ml-[14px] text-[19.200px] tracking-[-0.05px] text-[#c4c4c4]')}>Type here to search</span>
        <div className="ml-auto"><SearchArt /></div>
      </div>
      <div className="flex w-[64px] items-center justify-center">
        <div className="h-[21px] w-[20px] rounded-full border-[3px] border-white" />
      </div>
      <div className="mr-[6px] flex w-[61px] items-center justify-center">
        <svg viewBox="0 0 22 22" className="h-[22px] w-[22px]" fill="none" stroke="#eee" strokeWidth="1.400">
          <path d="M1 0v4h13V0M1 22v-4h13v4M2 6.500h11v8.500H2zM19.500 0v6M19.500 12v10" /><rect x="18" y="7.500" width="3" height="3" fill="#fff" stroke="none" />
        </svg>
      </div>
      <TaskApp open>
        <svg viewBox="0 0 30 26" className="h-[26px] w-[30px]">
          <path d="M0 2l1-2h11l2 3v4H0z" fill="#dd9a10" /><path d="M0 4h28l1 1v19H0z" fill="#fbd163" />
          <path d="M5 25V14l1-1h18l1 1v11h-6v-7h-8v7z" fill="#3f96d4" />
        </svg>
      </TaskApp>
      <TaskApp>
        <svg viewBox="0 0 32 32" className="h-[32px] w-[32px]">
          <defs>
            <linearGradient id="edgeTop" x1="0" y1="0" x2="1" y2=".4"><stop offset="0" stopColor="#1f8fe0" /><stop offset=".6" stopColor="#36c4d0" /><stop offset="1" stopColor="#6fdc5c" /></linearGradient>
          </defs>
          <path d="M1 13C3 4 10 0 17 0c9 0 15 6 15 13 0 5-4 8-8 8-3 0-5-1-4-3 2-3 0-7-5-7-8 0-13 3-14 7z" fill="url(#edgeTop)" />
          <path d="M0 16c0-5 4-9 10-8 5 0 8 3 8 6-4-1-6 2-6 5 1 7 9 9 17 6-3 5-8 7-13 7C7 32 0 25 0 16z" fill="#1677d2" />
          <path d="M12 18c0 8 9 11 17 7-3 5-7 7-11 7-7-1-10-9-6-14z" fill="#0f4fa4" />
        </svg>
      </TaskApp>
      <TaskApp open>
        <svg viewBox="0 0 30 30" className="h-[30px] w-[30px]">
          <circle cx="15" cy="15" r="15" fill="#fcc934" />
          <path d="M15 15L2 7.500A15 15 0 0 0 14 30l6-10z" fill="#2f9e4c" />
          <path d="M2 7.500A15 15 0 0 1 28 7.500H15L8.500 19z" fill="#e33b2e" />
          <circle cx="15" cy="15" r="7" fill="#fff" /><circle cx="15" cy="15" r="5.500" fill="#3b7ded" />
        </svg>
      </TaskApp>
      <TaskApp open>
        <div className="relative h-[29px] w-[32px]">
          <svg viewBox="0 0 32 29" className="h-[29px] w-[32px]">
            <path d="M8 0h12v10H8z" fill="#22a366" /><path d="M20 0h12v10H20z" fill="#33c481" /><path d="M8 10h12v9H8z" fill="#107c41" /><path d="M20 10h12v9H20z" fill="#21a366" /><path d="M8 19h24v10H8z" fill="#185c37" />
            <rect y="6" width="16" height="17" rx="1" fill="#107c41" />
          </svg>
          <span className={clsx(segoe, 'absolute left-[4px] top-[8px] text-[13px] font-bold text-white')}>X</span>
        </div>
      </TaskApp>
      <TaskApp open active><HmsLogo className="h-[24px] w-[24px]" /></TaskApp>
      <TaskApp open>
        <div className="flex h-[32px] w-[32px] items-center justify-center bg-[#2ba6d2]">
          <svg viewBox="0 0 32 32" className="h-[32px] w-[32px]" fill="none"><path d="M9 6L7 26h6z" fill="#0c4b6c" /><path d="M13 5v17.500h12" stroke="#fff" strokeWidth="5" /></svg>
        </div>
      </TaskApp>
      <TaskApp open>
        <div className="relative h-[30px] w-[32px]">
          <svg viewBox="0 0 32 30" className="h-[30px] w-[32px]">
            <circle cx="17" cy="15" r="15" fill="#d9502f" /><path d="M17 0a15 15 0 0 1 15 15H17z" fill="#ff8f6b" /><path d="M17 0v15H2A15 15 0 0 1 17 0z" fill="#ed6c47" />
            <rect y="6" width="16" height="17" rx="1" fill="#c43e1c" />
          </svg>
          <span className={clsx(segoe, 'absolute left-[4px] top-[8px] text-[13px] font-bold text-white')}>P</span>
        </div>
      </TaskApp>

      <div className="ml-auto flex items-center">
        <svg viewBox="0 0 31 29" className="h-[29px] w-[31px]">
          <path d="M7 20c-9 0-9-11-1-12C8-1 20-2 23 6c8 0 11 13 2 14z" fill="#c9d6f2" /><path d="M7 20c-8 0-8-10-2-11 5-1 7 2 9 4 3-4 9-6 13-4 5 3 5 10-2 11z" fill="#e6ecf9" />
          <path d="M20.500 14c3 4 4.500 7 4.500 10a4.500 4.500 0 0 1-9 0c0-3 2-6 4.500-10z" fill="#1f9ae0" />
        </svg>
        <span className={clsx(segoe, 'ml-[12px] mt-[2px] w-[50px] text-[18.500px] tracking-[-0.3px]')}>31°C</span>
        <span className={clsx(segoe, 'mt-[2px] w-[99px] text-[18.500px] tracking-[-0.2px]')}>Light rain</span>
        <ChevronUp className="h-[27px] w-[23px]" strokeWidth={1.700} />
        <svg viewBox="0 0 22 14" className="ml-[10px] h-[15px] w-[22px]" fill="none" stroke="#eee" strokeWidth="1.300">
          <path d="M6 2.500h14v10H5V9" /><rect x="7" y="4.500" width="11" height="6" fill="#fff" stroke="none" /><path d="M21.300 5.500v4M1 0v2.500M4.500 0v2.500M.5 3h4.500v2.500L4 7H1.500L.5 5.500zM2.700 7v6" />
        </svg>
        <svg viewBox="0 0 21 16" className="ml-[9px] h-[17px] w-[21px]" fill="none" stroke="#eee" strokeWidth="1.300">
          <path d="M1 5.500h3l4-4v13l-4-4H1zM12 5l7 7M19 5l-7 7" />
        </svg>
        <svg viewBox="0 0 23 24" className="ml-[16px] h-[24px] w-[23px]" fill="none" stroke="#eee" strokeWidth="1.400">
          <path d="M7 17.500L14.500 3c1-2 4.500-1 3.500 1.500L10.500 19 6.500 21.500z" /><path d="M9 12c-5 0-9 4-8 8s8 3 9-1M15.500 9c4-1.500 7 0 6 2.500s-4 2-6 1.500l-3 1.500" />
        </svg>
        <div className="ml-[14px] flex w-[82px] flex-col items-center gap-[9.500px]">
          <span className={clsx(segoe, 'text-[15.500px] tracking-[-0.3px]')}>5:14 PM</span>
          <span className={clsx(segoe, 'text-[15.500px] tracking-[-0.1px]')}>7/5/2022</span>
        </div>
        <svg viewBox="0 0 23 23" className="ml-[19px] h-[23px] w-[23px]" fill="none">
          <path d="M0 0h22v17H9l-4 4v-4H0z" fill="#fff" /><path d="M4 5h14M4 8.500h14M4 12h8" stroke="#333" strokeWidth="1.400" />
          <path d="M17 11a5.500 5.500 0 1 1-4 8c4 0 5-4 4-8z" fill="#2c2b2b" stroke="#fff" strokeWidth="1.200" />
        </svg>
        <div className="ml-[26px] mr-[5px] h-[53px] w-px bg-[#666]" />
      </div>
    </div>
  );
}

export default function App() {
  return (
    <div className="flex h-[1152px] w-[2048px] flex-col overflow-hidden bg-white">
      {/* Title bar */}
      <div className="flex h-[29px] shrink-0 items-center pl-[5px] text-[#222]">
        <HmsLogo className="h-[15px] w-[16px]" />
        <span className={clsx(segoe, 'ml-[8px] mt-[1px] text-[15.500px] tracking-[-0.04px]')}>{'HEC-HMS 4.9 [C:\\PMB_PUPR\\BiliBili\\Project_Bilibili\\Project_Bilibili\\Project_Bilibili.hms]'}</span>
        <svg viewBox="0 0 140 16" className="ml-auto mr-[27px] h-[16px] w-[140px]" fill="none" stroke="#222" strokeWidth="1.400">
          <path d="M1 8h13M126.500 2l12 12M138.500 2l-12 12" /><path d="M63 5h10v9.500H63zM66 5V2h10v9.500h-3" />
        </svg>
      </div>

      {/* Menu bar */}
      <div className="flex h-[29px] shrink-0 items-center border-b-2 border-[#a3a3a3] pl-[8px] pt-[3px] text-[#222]">
        {menus.map(m => (
          <span key={m.label} className={clsx(segoe, m.cell, 'shrink-0 text-[15.200px] tracking-[-0.18px]')}>{m.label}</span>
        ))}
      </div>

      <div className="h-[93px] shrink-0 bg-[#f0f0f0]">
        <MainToolbar />
        <PlayToolbar />
      </div>

      <div className="flex min-h-0 flex-1">
        <Sidebar />
        <div className="flex flex-1 flex-col border-l border-[#7c7c7c]">
          <div className="h-[612px] border-t border-[#8f8f8f] bg-[#ababab]">
            <BasinWindow />
          </div>
          <div className="h-[5px] bg-[#f0f0f0]" />
          <Console />
        </div>
        <div className="w-px bg-[#555]" />
      </div>

      <Taskbar />
    </div>
  );
}
